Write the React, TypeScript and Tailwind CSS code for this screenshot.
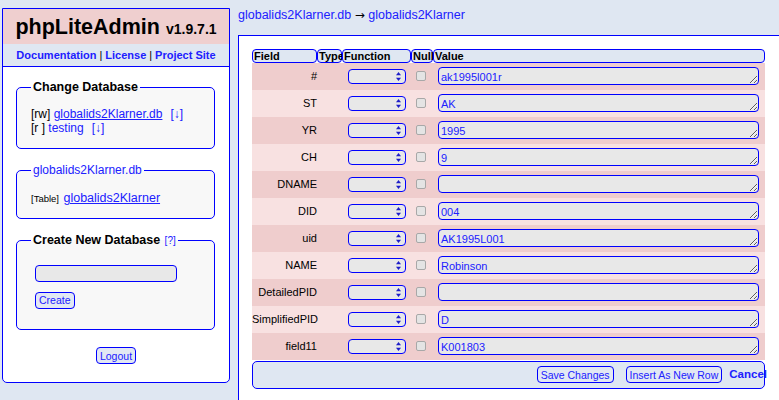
const rows: { name: string; value: string }[] = [
  { name: "#", value: "ak1995l001r" },
  { name: "ST", value: "AK" },
  { name: "YR", value: "1995" },
  { name: "CH", value: "9" },
  { name: "DNAME", value: "" },
  { name: "DID", value: "004" },
  { name: "uid", value: "AK1995L001" },
  { name: "NAME", value: "Robinson" },
  { name: "DetailedPID", value: "" },
  { name: "SimplifiedPID", value: "D" },
  { name: "field11", value: "K001803" },
];

function SelectArrows() {
  return (
    <svg width="5" height="9" viewBox="0 0 5 9" className="text-[#1c1cc8]">
      <path d="M2.5 0 L5 3.2 L0 3.2 Z" fill="currentColor" />
      <path d="M2.5 9 L5 5.8 L0 5.8 Z" fill="currentColor" />
    </svg>
  );
}

function Button({ label, className = "" }: { label: string; className?: string }) {
  return (
    <button
      className={`h-[17px] px-[3px] rounded-[4px] border border-[#0000ff] bg-[#e2e8f3] text-[10.5px] leading-none text-[#2020ff] ${className}`}
    >
      {label}
    </button>
  );
}

function Sidebar() {
  return (
    <div className="ml-[2px] mt-[8px] w-[228px] h-[375px] shrink-0 border border-[#0000ff] rounded-b-[5px] bg-white flex flex-col">
      <div className="h-[35px] bg-[#efcfcf] flex items-center justify-center gap-[6px] pt-[2px]">
        <span className="text-[21.5px] font-bold text-black">phpLiteAdmin</span>
        <span className="text-[14px] font-bold text-black mt-[4px]">v1.9.7.1</span>
      </div>
      <div className="h-[23px] bg-[#dfe7f2] border-b border-[#0000ff] flex items-center justify-center text-[11px] font-bold text-[#2020ff]">
        <span>Documentation</span>
        <span className="text-black font-normal mx-[3px]">|</span>
        <span>License</span>
        <span className="text-black font-normal mx-[3px]">|</span>
        <span>Project Site</span>
      </div>

      <fieldset className="mx-[13px] mt-[13px] w-[199px] border border-[#0000ff] rounded-[5px] bg-[#f8f8f8] px-[14px] pt-[13px] pb-[13px]">
        <legend className="px-[2px] text-[12.5px] font-bold text-black leading-[14px]">Change Database</legend>
        <div className="text-[12px] leading-[14px] text-black">
          [rw] <span className="text-[#2020ff] underline">globalids2Klarner.db</span>
          <span className="text-[#2020ff] ml-[8px]">[↓]</span>
        </div>
        <div className="text-[12px] leading-[14px] text-black">
          [r ] <span className="text-[#2020ff]">testing</span>
          <span className="text-[#2020ff] ml-[8px]">[↓]</span>
        </div>
      </fieldset>

      <fieldset className="mx-[13px] mt-[14px] w-[199px] border border-[#0000ff] rounded-[5px] bg-[#f8f8f8] px-[14px] pt-[13px] pb-[12px]">
        <legend className="px-[2px] text-[12px] text-[#2020ff] leading-[14px]">globalids2Klarner.db</legend>
        <div className="leading-[14px] text-black">
          <span className="text-[9.5px]">[Table]</span>{" "}
          <span className="text-[12.5px] text-[#2020ff] underline">globalids2Klarner</span>
        </div>
      </fieldset>

      <fieldset className="mx-[13px] mt-[13px] w-[199px] border border-[#0000ff] rounded-[5px] bg-[#f8f8f8] px-[14px] pt-[17px] pb-[18px]">
        <legend className="px-[2px] leading-[14px]">
          <span className="text-[12.5px] font-bold text-black">Create New Database</span>{" "}
          <span className="text-[10px] text-[#2020ff]">[?]</span>
        </legend>
        <div className="ml-[4px] w-[142px] h-[17px] rounded-[4px] border border-[#0000ff] bg-[#e8e8e8]" />
        <Button label="Create" className="ml-[4px] mt-[10px]" />
      </fieldset>

      <div className="flex justify-center mt-[17px]">
        <Button label="Logout" />
      </div>
    </div>
  );
}

function HeaderCell({ label, w }: { label: string; w: string }) {
  return (
    <div
      className={`${w} h-[14px] shrink-0 border border-[#0000ff] rounded-[4px] bg-[#dfe7f2] text-[11px] font-bold leading-[12px] text-black pl-[1px]`}
    >
      {label}
    </div>
  );
}

function Editor() {
  return (
    <div className="ml-[8px] flex flex-col">
      <div className="h-[36px] pt-[8px] text-[12.5px] leading-[14px] text-[#2020ff]">
        globalids2Klarner.db{" "}
        <span style={{ fontFamily: '"DejaVu Sans", sans-serif' }} className="text-black text-[12px]">
          →
        </span>{" "}
        globalids2Klarner
      </div>
      <div className="w-[560px] h-[380px] border-l border-t border-[#0000ff] bg-white pl-[13px] pt-[13px]">
        <div className="flex w-[513px]">
          <HeaderCell label="Field" w="w-[65px]" />
          <HeaderCell label="Type" w="w-[25px]" />
          <HeaderCell label="Function" w="w-[69px]" />
          <HeaderCell label="Null" w="w-[22px]" />
          <HeaderCell label="Value" w="w-[332px]" />
        </div>
        {rows.map((r, i) => (
          <div
            key={r.name}
            className={`flex items-center h-[27px] w-[513px] ${i % 2 === 0 ? "bg-[#efcdcd]" : "bg-[#f8e1e1]"}`}
          >
            <div className="w-[65px] text-right text-[11px] text-black">{r.name}</div>
            <div className="w-[31px]" />
            <div className="w-[58px] h-[15px] rounded-[4px] border border-[#0000ff] bg-[#e8e8e8] flex items-center justify-end pr-[4px]">
              <SelectArrows />
            </div>
            <div className="ml-[10px] w-[10px] h-[10px] rounded-[2px] border border-[#a8a8a8] bg-[#e4e4e4]" />
            <textarea
              readOnly
              rows={1}
              defaultValue={r.value}
              className="ml-[12px] w-[321px] h-[18px] mt-[-1px] rounded-[4px] border border-[#0000ff] bg-[#e8e8e8] px-[2px] pt-[3px] pb-0 text-[11px] leading-[12px] text-[#2020ff] overflow-hidden outline-none"
            />
          </div>
        ))}
        <div className="mt-[1px] w-[513px] h-[28px] border border-[#0000ff] rounded-[5px] bg-[#dfe7f2] flex items-center justify-end">
          <Button label="Save Changes" />
          <Button label="Insert As New Row" className="ml-[12px]" />
          <span className="ml-[7px] mr-[-3px] text-[11.5px] font-bold text-[#2020ff]">Cancel</span>
        </div>
      </div>
    </div>
  );
}

export default function App() {
  return (
    <div
      className="w-[779px] h-[400px] overflow-hidden bg-[#dfe7f2] flex"
      style={{ fontFamily: '"Liberation Sans", Arial, sans-serif' }}
    >
      <Sidebar />
      <Editor />
    </div>
  );
}
